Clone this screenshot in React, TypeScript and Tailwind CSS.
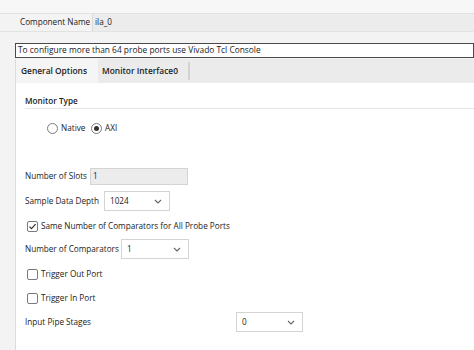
import React from 'react';

function Chevron() {
  return (
    <svg width="8" height="5" viewBox="0 0 8 5" className="text-[#666]">
      <path d="M1 1l3 3 3-3" fill="none" stroke="currentColor" strokeWidth="1.1" />
    </svg>
  );
}

function Select({ value, width }: { value: string; width: string }) {
  return (
    <div className={`flex items-center justify-between h-[20px] ${width} bg-white border border-[#d4d4d4] pl-[5px] pr-[7px]`}>
      <span>{value}</span>
      <Chevron />
    </div>
  );
}

function Checkbox({ checked, label }: { checked?: boolean; label: string }) {
  return (
    <div className="flex items-center h-[14px] pl-[2px]">
      <div className="w-[11px] h-[11px] border border-[#7a7a7a] rounded-[2px] bg-white flex items-center justify-center">
        {checked && (
          <svg width="9" height="9" viewBox="0 0 9 9">
            <path d="M1.5 4.6l2 2L7.6 2.2" fill="none" stroke="#333" strokeWidth="1.2" />
          </svg>
        )}
      </div>
      <span className="ml-[3px]">{label}</span>
    </div>
  );
}

function Radio({ checked, label, width }: { checked?: boolean; label: string; width?: string }) {
  return (
    <div className={`flex items-center h-[11px] ${width ?? ''}`}>
      <div className="w-[11px] h-[11px] rounded-full border border-[#7a7a7a] bg-white flex items-center justify-center">
        {checked && <div className="w-[5px] h-[5px] rounded-full bg-[#333]" />}
      </div>
      <span className="ml-[3px]">{label}</span>
    </div>
  );
}

export default function App() {
  return (
    <div className="w-[474px] h-[350px] overflow-hidden bg-[#f3f3f3] text-[8.2px] text-[#222] font-['Open_Sans','Noto_Sans',sans-serif] leading-none">
      {/* component name */}
      <div className="h-[14px] bg-[#f7f7f7] border-b border-[#e2e2e2]" />
      <div className="flex items-center h-[17px] pl-[20px] text-[8.2px]">
        <span className="w-[72px]">Component Name</span>
        <div className="flex-1 h-full flex items-center bg-[#ececec] border-l border-[#dadada] pl-[2px]">ila_0</div>
      </div>
      <div className="h-[12px] border-t border-[#e2e2e2]" />

      {/* info */}
      <div className="ml-[15px] h-[15px] border border-[#4a4a4a] bg-white flex items-center pl-[2px] text-[8.4px]">
        To configure more than 64 probe ports use Vivado Tcl Console
      </div>

      {/* tabs */}
      <div className="ml-[15px] mt-[1px] h-[24px] bg-[#ebebeb] flex font-semibold text-[8.4px] border-l border-[#dcdcdc]">
        <div className="w-[82px] bg-[#f5f5f5] flex items-center pl-[5px]">General Options</div>
        <div className="w-[92px] flex items-center pl-[4px] border-r-2 border-[#d3d3d3] my-[3px]">Monitor Interface0</div>
      </div>

      {/* content */}
      <div className="ml-[15px] h-[268px] bg-white border-l border-[#dcdcdc] pl-[9px]">
        <div className="pt-[14px] pb-[3px] h-[26px] font-semibold border-b border-[#e6e6e6]">Monitor Type</div>
        <div className="flex items-center pl-[22px] mt-[14px]">
          <Radio label="Native" width="w-[44px]" />
          <Radio checked label="AXI" />
        </div>

        <div className="flex items-center mt-[34px]">
          <span className="w-[65px]">Number of Slots</span>
          <div className="w-[98px] h-[17px] bg-[#ececec] border border-[#d4d4d4] flex items-center pl-[2px]">1</div>
        </div>
        <div className="flex items-center mt-[6px]">
          <span className="w-[79px]">Sample Data Depth</span>
          <Select value="1024" width="w-[66px]" />
        </div>
        <div className="mt-[8px]">
          <Checkbox checked label="Same Number of Comparators for All Probe Ports" />
        </div>
        <div className="flex items-center mt-[6px]">
          <span className="w-[96px]">Number of Comparators</span>
          <Select value="1" width="w-[68px]" />
        </div>
        <div className="mt-[8px]">
          <Checkbox label="Trigger Out Port" />
        </div>
        <div className="mt-[10px]">
          <Checkbox label="Trigger In Port" />
        </div>
        <div className="flex items-center mt-[7px]">
          <span className="w-[211px]">Input Pipe Stages</span>
          <Select value="0" width="w-[67px]" />
        </div>
      </div>
    </div>
  );
}
